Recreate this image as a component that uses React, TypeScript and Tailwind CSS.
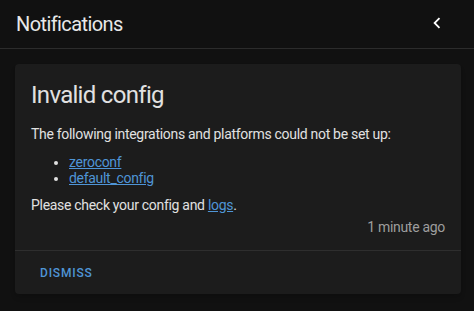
import React from 'react';

const App = () => {
  return (
    <div className="w-[474px] h-[311px] bg-[#111111] text-[#e1e1e1] overflow-hidden font-['Roboto',sans-serif]">
      {/* Header */}
      <div className="h-[49px] flex items-center justify-between pl-4 pr-[26px] border-b border-[#2c2c2c]">
        <h1 className="text-[20px] leading-[30px] font-normal text-[#e8e8e8] tracking-[-0.6px]">Notifications</h1>
        <svg width="22" height="22" viewBox="0 0 24 24" className="text-white -mt-[2px]">
          <path d="M15.41 7.41 14 6l-6 6 6 6 1.41-1.41L10.83 12z" fill="currentColor" />
        </svg>
      </div>

      {/* Card */}
      <div className="mx-[15px] mt-[15px] w-[446px] bg-[#1c1c1c] rounded-sm shadow-md">
        <div className="px-4 pt-[15px] pb-[13px]">
          <h2 className="text-[24px] leading-8 text-[#e1e1e1] font-normal tracking-[-0.7px]">Invalid config</h2>
          <p className="mt-[13px] text-[14px] leading-5 tracking-[-0.3px]">The following integrations and platforms could not be set up:</p>
          <ul className="mt-[10px] list-disc pl-[38px] text-[14px] leading-[16px] tracking-[-0.3px] marker:text-[#e1e1e1]">
            <li><a className="text-[#4f95d6] underline">zeroconf</a></li>
            <li><a className="text-[#4f95d6] underline">default_config</a></li>
          </ul>
          <p className="mt-[9px] text-[14px] leading-5 tracking-[-0.3px]">
            Please check your config and <a className="text-[#4f95d6] underline">logs</a>.
          </p>
          <div className="mt-[2px] text-right text-[14px] leading-5 tracking-[-0.3px] text-[#9e9e9e]">1 minute ago</div>
        </div>
        <div className="border-t border-[#2e2e2e] h-[44px] flex items-center px-[25px]">
          <button className="text-[12px] font-medium tracking-[0.8px] text-[#4f95d6]">DISMISS</button>
        </div>
      </div>
    </div>
  );
};

export default App;
